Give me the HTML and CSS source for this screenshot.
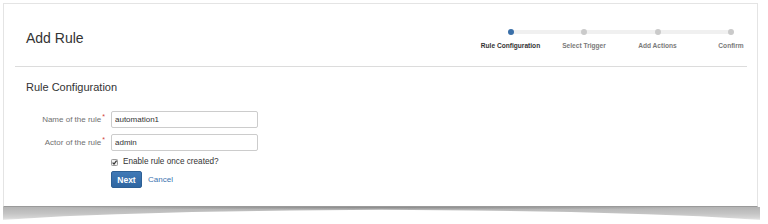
FILE: index.html
```html
<!DOCTYPE html>
<html>
<head>
<meta charset="utf-8">
<link rel="stylesheet" href="styles.css">
</head>
<body>
<div class="page">
  <div class="card">
    <div class="header">
      <h2 class="title">Add Rule</h2>
      <ol class="stepper">
        <li class="step active"><span class="dot"></span><span class="step-label">Rule Configuration</span></li>
        <li class="step"><span class="dot"></span><span class="step-label">Select Trigger</span></li>
        <li class="step"><span class="dot"></span><span class="step-label">Add Actions</span></li>
        <li class="step"><span class="dot"></span><span class="step-label">Confirm</span></li>
      </ol>
    </div>
    <div class="section">
      <h3 class="section-title">Rule Configuration</h3>
      <form class="form">
        <label class="field-label" for="name">Name of the rule<span class="req">*</span></label>
        <input class="text" id="name" type="text" value="automation1">
        <label class="field-label" for="actor">Actor of the rule<span class="req">*</span></label>
        <input class="text" id="actor" type="text" value="admin">
        <div class="check-row">
          <svg class="check" width="7" height="7" viewBox="0 0 7 7"><rect x="0.5" y="0.5" width="6" height="6" rx="0.8" fill="#f2f2f2" stroke="#9a9a9a"/><path d="M1.6 3.6 L3 5 L5.6 1.6" fill="none" stroke="#333" stroke-width="1.2"/></svg>
          <span class="check-label">Enable rule once created?</span>
        </div>
        <div class="actions">
          <button type="button" class="btn">Next</button>
          <a class="cancel" href="#">Cancel</a>
        </div>
      </form>
    </div>
  </div>
  <div class="curl"></div>
</div>
</body>
</html>
```

FILE: styles.css
```css
html, body {
  margin: 0;
  padding: 0;
  background: #fff;
}
body {
  font-family: "Liberation Sans", Arial, sans-serif;
  color: #333;
}
.page {
  padding: 3px 10px 0 3px;
}
.card {
  box-sizing: border-box;
  width: 755px;
  height: 204px;
  background: #fff;
  border: 1px solid #e4e4e4;
  border-bottom-color: #9a9a9a;
}
.header {
  height: 62px;
  margin: 0 10px 0 11px;
  border-bottom: 1px solid #dcdcdc;
  display: flex;
  justify-content: space-between;
  align-items: flex-start;
}
.title {
  margin: 0;
  padding: 26px 0 0 11px;
  font-size: 14px;
  line-height: 16px;
  font-weight: normal;
  color: #333;
}
.stepper {
  list-style: none;
  margin: 25px 1px 0 0;
  padding: 0;
  display: grid;
  grid-template-columns: repeat(4, 30px);
  column-gap: 43.5px;
  background: linear-gradient(#f0f0f0, #f0f0f0) no-repeat;
  background-position: 15px 1px;
  background-size: calc(100% - 30px) 4px;
}
.step {
  display: flex;
  flex-direction: column;
  align-items: center;
}
.dot {
  width: 6px;
  height: 6px;
  border-radius: 50%;
  background: #cacaca;
}
.step.active .dot {
  background: #3a6fa8;
}
.step-label {
  margin-top: 7px;
  font-size: 6.6px;
  line-height: 8px;
  font-weight: bold;
  color: #7a7a7a;
  white-space: nowrap;
}
.step.active .step-label {
  color: #333;
}
.section {
  padding: 14px 0 0 22px;
}
.section-title {
  margin: 0 0 17px;
  font-size: 11px;
  line-height: 13px;
  font-weight: normal;
  color: #333;
}
.form {
  display: grid;
  grid-template-columns: 79px 147px;
  column-gap: 6px;
  row-gap: 6px;
}
.field-label {
  text-align: right;
  font-size: 8px;
  line-height: 17px;
  color: #707070;
  white-space: nowrap;
}
.req {
  color: #d04437;
  font-size: 7px;
  position: relative;
  top: -3px;
  margin-left: 1px;
}
.text {
  box-sizing: border-box;
  width: 147px;
  height: 17px;
  margin: 0;
  padding: 0 3px;
  border: 1px solid #cccccc;
  border-radius: 2px;
  font-family: "Liberation Sans", Arial, sans-serif;
  font-size: 8px;
  color: #333;
  background: #fff;
}
.check-row {
  grid-column: 2;
  display: flex;
  align-items: center;
  gap: 5px;
  height: 8px;
  margin-top: 1px;
}
.check {
  display: block;
  flex: none;
}
.check-label {
  font-size: 8.2px;
  line-height: 8px;
  color: #333;
}
.actions {
  grid-column: 2;
  display: flex;
  align-items: center;
  gap: 6px;
  margin-top: -1px;
}
.btn {
  box-sizing: border-box;
  width: 31px;
  height: 17px;
  margin: 0;
  padding: 0;
  border: 1px solid #2d5f94;
  border-radius: 2px;
  background: linear-gradient(#4079b6, #2f66a1);
  color: #fff;
  font-family: "Liberation Sans", Arial, sans-serif;
  font-size: 8.5px;
  font-weight: bold;
}
.cancel {
  font-size: 8px;
  color: #3b73af;
  text-decoration: none;
}
.curl {
  width: 757px;
  height: 13px;
  background:
    radial-gradient(ellipse 45% 3px at 50% 0, rgba(0,0,0,0.25), rgba(0,0,0,0)),
    linear-gradient(to bottom, #b4b4b4 0%, #c4c4c4 50%, #d6d6d6 85%, #ececec 100%);
  clip-path: polygon(0 0, 100% 0, 100% 100%, 97% 88%, 92% 72%, 85% 55%, 75% 38%, 62% 26%, 50% 22%, 38% 26%, 25% 38%, 15% 55%, 8% 72%, 3% 88%, 0 100%);
}
```
